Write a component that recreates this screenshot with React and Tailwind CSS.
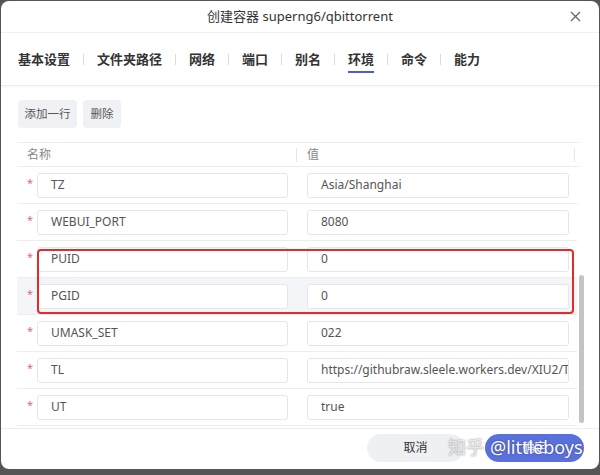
import React from 'react';

const tabs = ['基本设置', '文件夹路径', '网络', '端口', '别名', '环境', '命令', '能力'];

const rows = [
  { name: 'TZ', value: 'Asia/Shanghai' },
  { name: 'WEBUI_PORT', value: '8080' },
  { name: 'PUID', value: '0' },
  { name: 'PGID', value: '0', hover: true },
  { name: 'UMASK_SET', value: '022' },
  { name: 'TL', value: 'https://githubraw.sleele.workers.dev/XIU2/TrackersListCollection/master/best.txt' },
  { name: 'UT', value: 'true' },
];

const Field = ({ text, width }) => (
  <div
    className={`${width} h-[25px] flex items-center px-[13px] bg-white border border-[#e4e6eb] rounded-[3px] text-[12px] text-[#555] whitespace-nowrap overflow-hidden`}
  >
    {text}
  </div>
);

const App = () => {
  return (
    <div
      className="w-[600px] h-[475px] bg-[#555] pt-px pl-px overflow-hidden"
      style={{ fontFamily: '"Noto Sans", "Noto Sans CJK SC", sans-serif' }}
    >
      <div className="relative w-[598px] h-[468px] bg-white rounded-[8px] flex flex-col overflow-hidden">
        {/* Title */}
        <div className="h-[32px] shrink-0 flex items-center justify-between border-b border-[#f0f0f0]">
          <div className="w-[30px]" />
          <div className="text-[13px] text-[#333]">创建容器 superng6/qbittorrent</div>
          <div className="w-[30px] flex justify-start pl-[1px]">
            <svg width="11" height="11" viewBox="0 0 11 11" className="text-[#666]">
              <path d="M1 1L10 10M10 1L1 10" stroke="currentColor" strokeWidth="1.3" fill="none" />
            </svg>
          </div>
        </div>

        {/* Tabs */}
        <div className="h-[53px] shrink-0 flex items-center pl-[17px] border-b border-[#ececec] shadow-[0_1px_2px_rgba(0,0,0,0.04)]">
          {tabs.map((t, i) => (
            <React.Fragment key={t}>
              {i > 0 && <div className="w-px h-[11px] bg-[#dcdcdc] mx-[13px]" />}
              <div className="flex flex-col items-center pt-[5px]">
                <span className="text-[13px] font-bold text-[#333] leading-[18px]">{t}</span>
                <span className={`mt-[3px] h-[2px] w-full ${t === '环境' ? 'bg-[#4b5dd0]' : 'bg-transparent'}`} />
              </div>
            </React.Fragment>
          ))}
        </div>

        {/* Body */}
        <div className="flex-1 px-[16px] pt-[14px]">
          <div className="flex gap-[6px] pl-px">
            <button className="w-[59px] h-[28px] bg-[#f0f1f4] rounded-[4px] text-[11.5px] text-[#555]">添加一行</button>
            <button className="w-[38px] h-[28px] bg-[#f0f1f4] rounded-[4px] text-[11.5px] text-[#555]">删除</button>
          </div>

          <div className="mt-[14px] w-[562px] h-[25px] flex items-center border-t border-b border-[#ebedf0] text-[12px] text-[#888]">
            <div className="w-[280px] h-full flex items-center justify-between pl-[10px]">
              <span>名称</span>
              <span className="w-px h-[14px] bg-[#e6e6e6]" />
            </div>
            <div className="w-[280px] h-full flex items-center justify-between pl-[10px] pr-[2px]">
              <span>值</span>
              <span className="w-px h-[14px] bg-[#e6e6e6]" />
            </div>
          </div>

          <div className="flex">
            <div className="w-[560px]">
              {rows.map((r) => (
                <div
                  key={r.name}
                  className={`h-[37px] flex items-center border-b border-[#ebedf0] ${r.hover ? 'bg-[#f4f5f8]' : 'bg-white'}`}
                >
                  <div className="w-[280px] flex items-center pl-[10px]">
                    <span className="w-[10px] text-[11px] text-[#e0677c] -mt-[4px]">*</span>
                    <Field text={r.name} width="w-[251px]" />
                  </div>
                  <div className="w-[280px] flex items-center pl-[10px]">
                    <Field text={r.value} width="w-[262px]" />
                  </div>
                </div>
              ))}
            </div>
            <div className="w-[7px] pl-[2px]">
              <div className="mt-[108px] w-[5px] h-[148px] rounded-full bg-[#c4c4c4]" />
            </div>
          </div>
        </div>

        {/* Footer */}
        <div className="h-[41px] shrink-0 border-t border-[#ebedf0] flex items-center justify-end gap-[21px] pr-[15px] pb-[2px]">
          <button className="w-[97px] h-[28px] rounded-full bg-[#eef0f3] text-[12px] text-[#333]">取消</button>
          <button className="w-[99px] h-[28px] rounded-full bg-[#5a70dc] text-[12px] text-white">确定</button>
        </div>

        {/* annotation box */}
        <div className="absolute left-[36px] top-[248px] w-[537px] h-[65px] border-[2.5px] border-[#e42a2a] rounded-[4px]" />

        {/* watermark */}
        <div className="absolute left-[447px] top-[434px] flex items-center gap-[6px] text-[18px] leading-[24px] [text-shadow:0_0_2px_rgba(0,0,0,0.45)]">
          <span className="text-[#e8e8e8]">知乎</span>
          <span className="text-white">@littleboys</span>
        </div>
      </div>
    </div>
  );
};

export default App;
